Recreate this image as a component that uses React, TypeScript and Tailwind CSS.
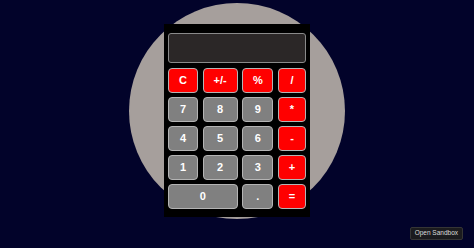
import React from "react";

const keys: { label: string; kind: "op" | "num"; span?: number }[] = [
  { label: "C", kind: "op" },
  { label: "+/-", kind: "op" },
  { label: "%", kind: "op" },
  { label: "/", kind: "op" },
  { label: "7", kind: "num" },
  { label: "8", kind: "num" },
  { label: "9", kind: "num" },
  { label: "*", kind: "op" },
  { label: "4", kind: "num" },
  { label: "5", kind: "num" },
  { label: "6", kind: "num" },
  { label: "-", kind: "op" },
  { label: "1", kind: "num" },
  { label: "2", kind: "num" },
  { label: "3", kind: "num" },
  { label: "+", kind: "op" },
  { label: "0", kind: "num", span: 2 },
  { label: ".", kind: "num" },
  { label: "=", kind: "op" },
];

export default function App() {
  return (
    <div
      className="relative w-full h-[248px] bg-[#02032a] overflow-hidden"
      style={{ fontFamily: '"Liberation Sans", Arial, sans-serif' }}
    >
      {/* backdrop circle */}
      <div className="mx-auto mt-[3px] w-[216px] h-[216px] rounded-full bg-[#a69f9c] flex flex-col items-center pt-[21px]">
        {/* calculator body */}
        <div className="w-[146px] h-[193px] bg-black pt-[9px] px-[4px]">
          <div className="h-[30px] w-full bg-[#2b2727] border border-[#8a8a8a] rounded-[3px]" />
          <div className="mt-[5px] grid grid-cols-[30px_35px_31px_28px] auto-rows-[24.5px] gap-x-[4.67px] gap-y-[4.6px]">
            {keys.map((k) => (
              <button
                key={k.label}
                className={`flex items-center justify-center rounded-[4px] border border-[#b4b4b4] text-white font-bold text-[11px] leading-none ${
                  k.kind === "op" ? "bg-[#ff0000]" : "bg-[#808080]"
                } ${k.span === 2 ? "col-span-2" : ""}`}
              >
                {k.label}
              </button>
            ))}
          </div>
        </div>
      </div>

      {/* sandbox button */}
      <div className="absolute right-[11px] bottom-[8px] h-[13px] px-[4px] flex items-center bg-[#1b1b1e] border border-[#353535] rounded-[2px] text-[6.5px] text-[#dcdcdc] leading-none">
        Open Sandbox
      </div>
    </div>
  );
}
